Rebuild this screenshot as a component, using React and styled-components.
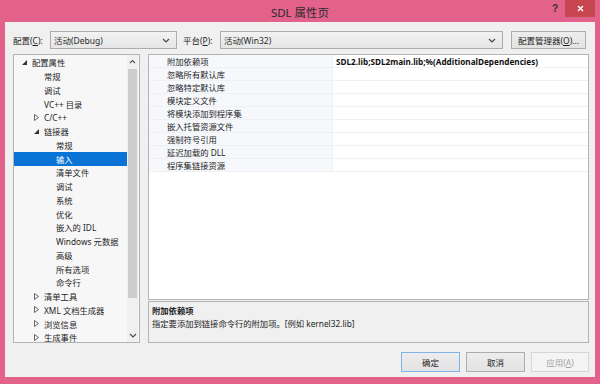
import React from "react";
import styled, { createGlobalStyle } from "styled-components";

const Global = createGlobalStyle`
  html, body { margin: 0; padding: 0; }
  body { width: 600px; height: 384px; overflow: hidden; font-family: "Noto Sans", "Noto Sans CJK SC", sans-serif; }
  * { box-sizing: border-box; }
`;

const CJK = `"Noto Sans", "Noto Sans CJK SC", sans-serif`;

const Window = styled.div`
  width: 600px;
  height: 384px;
  background: #e3628b;
  display: flex;
  flex-direction: column;
`;

const TitleBar = styled.div`
  height: 22px;
  position: relative;
  display: flex;
  align-items: center;
  justify-content: center;
`;

const Title = styled.div`
  font-family: ${CJK};
  font-size: 11.5px;
  color: #2b2b2b;
  margin-top: 2px;
`;

const TitleButtons = styled.div`
  position: absolute;
  right: 5px;
  top: 0;
  display: flex;
  align-items: flex-start;
`;

const HelpBtn = styled.div`
  width: 20px;
  height: 17px;
  font-family: "Liberation Sans", sans-serif;
  font-weight: bold;
  font-size: 10px;
  color: #333;
  display: flex;
  align-items: center;
  justify-content: center;
`;

const CloseBtn = styled.div`
  width: 30px;
  height: 17px;
  background: #c7464f;
  display: flex;
  align-items: center;
  justify-content: center;
`;

const Client = styled.div`
  flex: 1;
  margin: 0 5px 7px 5px;
  background: #f0f0f0;
  padding: 9px 6px 0 8px;
  display: flex;
  flex-direction: column;
  font-family: ${CJK};
  font-size: 8.3px;
  color: #1e1e1e;
`;

const TopRow = styled.div`
  height: 18px;
  display: flex;
  align-items: center;
`;

const Label = styled.div`
  width: ${(p) => p.w}px;
  font-size: 8.5px;
  color: #1e1e1e;
  white-space: nowrap;
`;

const Combo = styled.div`
  width: ${(p) => p.w}px;
  height: 18px;
  margin-right: ${(p) => p.mr || 0}px;
  border: 1px solid #acacac;
  background: linear-gradient(#f2f2f2, #e6e6e6);
  display: flex;
  align-items: center;
  justify-content: space-between;
  padding: 0 6px 0 3px;
  font-size: 8.5px;
  color: #2a2a2a;
`;

const Button = styled.div`
  width: ${(p) => p.w}px;
  height: ${(p) => p.h || 19}px;
  border: 1px solid ${(p) => (p.primary ? "#7eb4ea" : p.disabled ? "#d5d5d5" : "#adadad")};
  background: ${(p) => (p.disabled ? "#f4f4f4" : "linear-gradient(#ededed, #e3e3e3)")};
  color: ${(p) => (p.disabled ? "#a3a3a3" : "#1e1e1e")};
  display: flex;
  align-items: center;
  justify-content: center;
  font-size: 8.5px;
  white-space: nowrap;
`;

const Main = styled.div`
  margin-top: 5px;
  height: 289px;
  display: flex;
  gap: 8px;
`;

const Tree = styled.div`
  width: 127px;
  border: 1px solid #b3b3b3;
  background: #f7f7f7;
  display: flex;
`;

const TreeList = styled.div`
  flex: 1;
  padding-top: 0.5px;
  overflow: hidden;
`;

const TreeRow = styled.div`
  height: 13.75px;
  display: flex;
  align-items: center;
  padding-left: ${(p) => 6 + p.level * 12}px;
  background: ${(p) => (p.selected ? "#0a74d6" : "transparent")};
  color: ${(p) => (p.selected ? "#ffffff" : "#1e1e1e")};
  white-space: nowrap;
`;

const Arrow = styled.span`
  width: 12px;
  display: inline-flex;
  align-items: center;
  justify-content: flex-start;
  padding-left: 2px;
`;

const ScrollBar = styled.div`
  width: 11px;
  margin: 0 1px 0 0;
  background: #f0f0f0;
  display: flex;
  flex-direction: column;
  align-items: stretch;
`;

const ScrollArrow = styled.div`
  height: 13px;
  display: flex;
  align-items: center;
  justify-content: center;
`;

const Thumb = styled.div`
  margin: 1px 1px;
  height: 229px;
  background: #cdcdcd;
`;

const ScrollTrack = styled.div`
  flex: 1;
`;

const Right = styled.div`
  flex: 1;
  display: flex;
  flex-direction: column;
  gap: 1px;
`;

const Grid = styled.div`
  height: 246px;
  border: 1px solid #b3b3b3;
  background: #ffffff;
  display: flex;
  flex-direction: column;
`;

const GridRow = styled.div`
  height: 13px;
  display: grid;
  grid-template-columns: 184px 1fr;
  border-bottom: 1px solid #f0f1f3;
`;

const NameCell = styled.div`
  background: #f6f8fc;
  padding-left: 18px;
  display: flex;
  align-items: center;
  border-right: 1px solid #eef0f3;
  white-space: nowrap;
`;

const ValueCell = styled.div`
  padding-left: 3px;
  display: flex;
  align-items: center;
  font-family: "Noto Sans", sans-serif;
  font-weight: bold;
  font-size: 8.2px;
  color: #111;
  white-space: nowrap;
`;

const Desc = styled.div`
  flex: 1;
  border: 1px solid #b3b3b3;
  background: #f0f0f0;
  padding: 1px 3px;
  display: flex;
  flex-direction: column;
`;

const DescTitle = styled.div`
  font-weight: bold;
  height: 13px;
  display: flex;
  align-items: center;
`;

const DescText = styled.div`
  height: 13px;
  display: flex;
  align-items: center;
  white-space: nowrap;
`;

const Footer = styled.div`
  margin-top: 9px;
  display: flex;
  justify-content: flex-end;
  gap: 6px;
`;

const Down = () => (
  <svg width="8" height="5" viewBox="0 0 8 5">
    <path d="M1 1 L4 4 L7 1" fill="none" stroke="#444" strokeWidth="1.1" />
  </svg>
);

const Up = () => (
  <svg width="7" height="5" viewBox="0 0 7 5">
    <path d="M1 4 L3.5 1.5 L6 4" fill="none" stroke="#555" strokeWidth="1.1" />
  </svg>
);

const Expanded = () => (
  <svg width="5" height="5" viewBox="0 0 5 5">
    <path d="M5 0 L5 5 L0 5 Z" fill="#333" />
  </svg>
);

const Collapsed = () => (
  <svg width="5" height="7" viewBox="0 0 5 7">
    <path d="M0.5 0.5 L4.5 3.5 L0.5 6.5 Z" fill="none" stroke="#555" strokeWidth="0.9" />
  </svg>
);

const treeItems = [
  { t: "配置属性", l: 0, a: "e" },
  { t: "常规", l: 1 },
  { t: "调试", l: 1 },
  { t: "VC++ 目录", l: 1 },
  { t: "C/C++", l: 1, a: "c" },
  { t: "链接器", l: 1, a: "e" },
  { t: "常规", l: 2 },
  { t: "输入", l: 2, s: true },
  { t: "清单文件", l: 2 },
  { t: "调试", l: 2 },
  { t: "系统", l: 2 },
  { t: "优化", l: 2 },
  { t: "嵌入的 IDL", l: 2 },
  { t: "Windows 元数据", l: 2 },
  { t: "高级", l: 2 },
  { t: "所有选项", l: 2 },
  { t: "命令行", l: 2 },
  { t: "清单工具", l: 1, a: "c" },
  { t: "XML 文档生成器", l: 1, a: "c" },
  { t: "浏览信息", l: 1, a: "c" },
  { t: "生成事件", l: 1, a: "c" },
];

const props = [
  ["附加依赖项", "SDL2.lib;SDL2main.lib;%(AdditionalDependencies)"],
  ["忽略所有默认库", ""],
  ["忽略特定默认库", ""],
  ["模块定义文件", ""],
  ["将模块添加到程序集", ""],
  ["嵌入托管资源文件", ""],
  ["强制符号引用", ""],
  ["延迟加载的 DLL", ""],
  ["程序集链接资源", ""],
];

export default function App() {
  return (
    <>
      <Global />
      <Window>
        <TitleBar>
          <Title>SDL 属性页</Title>
          <TitleButtons>
            <HelpBtn>?</HelpBtn>
            <CloseBtn>
              <svg width="7" height="7" viewBox="0 0 7 7">
                <path d="M1 1 L6 6 M6 1 L1 6" stroke="#fff" strokeWidth="1.4" />
              </svg>
            </CloseBtn>
          </TitleButtons>
        </TitleBar>
        <Client>
          <TopRow>
            <Label w={37}>配置(<u>C</u>):</Label>
            <Combo w={127} mr={6}>
              <span>活动(Debug)</span>
              <Down />
            </Combo>
            <Label w={37}>平台(<u>P</u>):</Label>
            <Combo w={283} mr={8}>
              <span>活动(Win32)</span>
              <Down />
            </Combo>
            <Button w={75} h={18}>
              配置管理器(<u>O</u>)...
            </Button>
          </TopRow>
          <Main>
            <Tree>
              <TreeList>
                {treeItems.map((it, i) => (
                  <TreeRow key={i} level={it.l} selected={it.s}>
                    <Arrow>
                      {it.a === "e" ? <Expanded /> : it.a === "c" ? <Collapsed /> : null}
                    </Arrow>
                    {it.t}
                  </TreeRow>
                ))}
              </TreeList>
              <ScrollBar>
                <ScrollArrow>
                  <Up />
                </ScrollArrow>
                <Thumb />
                <ScrollTrack />
                <ScrollArrow>
                  <Down />
                </ScrollArrow>
              </ScrollBar>
            </Tree>
            <Right>
              <Grid>
                {props.map(([n, v], i) => (
                  <GridRow key={i}>
                    <NameCell>{n}</NameCell>
                    <ValueCell>{v}</ValueCell>
                  </GridRow>
                ))}
              </Grid>
              <Desc>
                <DescTitle>附加依赖项</DescTitle>
                <DescText>指定要添加到链接命令行的附加项。[例如 kernel32.lib]</DescText>
              </Desc>
            </Right>
          </Main>
          <Footer>
            <Button w={59} h={20} primary>
              确定
            </Button>
            <Button w={59} h={20}>
              取消
            </Button>
            <Button w={58} h={20} disabled>
              应用(<u>A</u>)
            </Button>
          </Footer>
        </Client>
      </Window>
    </>
  );
}
